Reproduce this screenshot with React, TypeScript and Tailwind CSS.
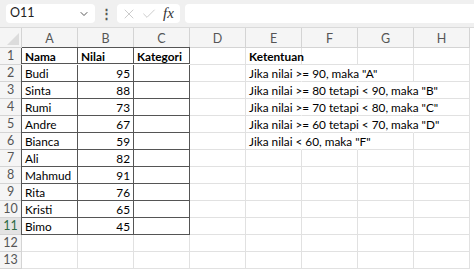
import { ChevronDown, X, Check } from 'lucide-react';

const cols = ['A', 'B', 'C', 'D', 'E', 'F', 'G', 'H'];

const data: Array<[string, string]> = [
  ['Budi', '95'],
  ['Sinta', '88'],
  ['Rumi', '73'],
  ['Andre', '67'],
  ['Bianca', '59'],
  ['Ali', '82'],
  ['Mahmud', '91'],
  ['Rita', '76'],
  ['Kristi', '65'],
  ['Bimo', '45'],
];

const rules = [
  'Jika nilai >= 90, maka "A"',
  'Jika nilai >= 80 tetapi < 90, maka "B"',
  'Jika nilai >= 70 tetapi < 80, maka "C"',
  'Jika nilai >= 60 tetapi < 70, maka "D"',
  'Jika nilai < 60, maka "F"',
];

function Cell({ children, className = '' }: { children?: React.ReactNode; className?: string }) {
  return (
    <div className={`h-[17px] border-r border-b border-[#e1e1e1] px-[3px] leading-[17px] whitespace-nowrap ${className}`}>
      {children}
    </div>
  );
}

export default function App() {
  const rows = Array.from({ length: 13 }, (_, i) => i + 1);

  return (
    <div className="w-[474px] h-[272px] overflow-hidden bg-white text-[11.8px] text-black" style={{ fontFamily: 'Lato, "Open Sans", sans-serif' }}>
      {/* Formula bar */}
      <div className="h-[28px] bg-[#f0f0f0] border-b border-[#dadada] flex items-center gap-[4px] pl-[6px]">
        <div className="w-[89px] h-[19px] bg-white rounded-[4px] flex items-center justify-between pl-[4px] pr-[5px] text-[12.5px] text-[#222]">
          <span>O11</span>
          <ChevronDown size={12} strokeWidth={1.8} className="text-[#444]" />
        </div>
        <div className="w-[14px] flex justify-center text-[#555] text-[13px] leading-none font-bold">⋮</div>
        <div className="w-[63px] h-[19px] bg-white rounded-[4px] flex items-center gap-[4px] pl-[4px]">
          <X size={16} strokeWidth={1} className="text-[#b0b0b0]" />
          <Check size={16} strokeWidth={1} className="text-[#b0b0b0]" />
          <span className="text-[15px] italic text-[#333] leading-none ml-[2px]" style={{ fontFamily: '"Liberation Serif", serif' }}>fx</span>
        </div>
        <div className="flex-1 h-[19px] bg-white rounded-l-[4px] ml-[1px]" />
      </div>

      {/* Grid */}
      <div className="grid grid-cols-[22px_repeat(8,56px)]">
        {/* Header row */}
        <div className="h-[20px] bg-[#f5f5f5] border-r border-b border-[#d4d4d4] relative">
          <div className="absolute right-[2px] bottom-[2px] w-0 h-0 border-l-[12px] border-l-transparent border-b-[12px] border-b-[#dcdcdc]" />
        </div>
        {cols.map((c) => (
          <div key={c} className="h-[20px] bg-[#f5f5f5] border-r border-b border-[#d4d4d4] flex items-center justify-center pt-[3px] text-[12.5px] text-[#555]">
            {c}
          </div>
        ))}

        {rows.map((r) => {
          const d = r >= 2 && r <= 11 ? data[r - 2] : null;
          const rule = r >= 2 && r <= 6 ? rules[r - 2] : null;
          const inTable = r <= 11;
          const tb = inTable ? 'border-b-[#555]' : '';
          const long = r >= 3 && r <= 5;
          return (
            <div key={r} className="contents">
              <div
                className={`h-[17px] border-r border-b border-[#d4d4d4] flex items-center justify-center text-[12.5px] leading-none ${
                  r === 11 ? 'bg-[#e3e3e3] text-[#2d6b45] border-r-[#3c8a5a]' : 'bg-[#f5f5f5] text-[#555]'
                }`}
              >
                {r}
              </div>
              <Cell className={`${inTable ? 'border-r-[#555] border-l border-l-[#555] -ml-px' : ''} ${tb} ${r === 1 ? 'font-bold border-t border-t-[#555] -mt-px' : ''}`}>
                {r === 1 ? 'Nama' : d?.[0]}
              </Cell>
              <Cell className={`${inTable ? 'border-r-[#555]' : ''} ${tb} ${r === 1 ? 'font-bold border-t border-t-[#555] -mt-px' : 'text-right'}`}>
                {r === 1 ? 'Nilai' : d?.[1]}
              </Cell>
              <Cell className={`${inTable ? 'border-r-[#555]' : ''} ${tb} ${r === 1 ? 'font-bold border-t border-t-[#555] -mt-px' : ''}`}>
                {r === 1 ? 'Kategori' : ''}
              </Cell>
              <Cell />
              <Cell className={`overflow-visible ${r === 1 ? 'font-bold' : ''} ${rule ? 'border-r-transparent' : ''}`}>
                {r === 1 ? 'Ketentuan' : rule}
              </Cell>
              <Cell className={rule ? 'border-r-transparent' : ''} />
              <Cell className={long ? 'border-r-transparent' : ''} />
              <Cell />
            </div>
          );
        })}
      </div>
    </div>
  );
}
